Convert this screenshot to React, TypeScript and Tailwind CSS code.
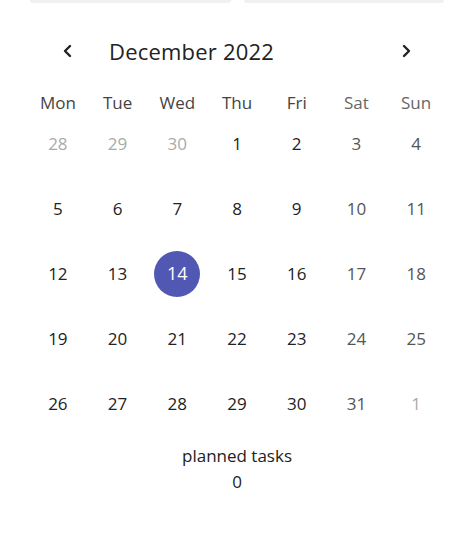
import React from "react";

const weeks: { d: number; muted?: boolean; sel?: boolean }[][] = [
  [{ d: 28, muted: true }, { d: 29, muted: true }, { d: 30, muted: true }, { d: 1 }, { d: 2 }, { d: 3 }, { d: 4 }],
  [{ d: 5 }, { d: 6 }, { d: 7 }, { d: 8 }, { d: 9 }, { d: 10 }, { d: 11 }],
  [{ d: 12 }, { d: 13 }, { d: 14, sel: true }, { d: 15 }, { d: 16 }, { d: 17 }, { d: 18 }],
  [{ d: 19 }, { d: 20 }, { d: 21 }, { d: 22 }, { d: 23 }, { d: 24 }, { d: 25 }],
  [{ d: 26 }, { d: 27 }, { d: 28 }, { d: 29 }, { d: 30 }, { d: 31 }, { d: 1, muted: true }],
];

const names = ["Mon", "Tue", "Wed", "Thu", "Fri", "Sat", "Sun"];

export default function App() {
  return (
    <div
      className="w-[474px] h-[539px] bg-white relative overflow-hidden"
      style={{ fontFamily: "'Open Sans', 'Noto Sans', sans-serif" }}
    >
      <div className="flex gap-[13px] px-[30px] h-[3px]">
        <div className="flex-1 bg-[#f0f0f0] rounded-b" />
        <div className="flex-1 bg-[#f0f0f0] rounded-b" />
      </div>
      <div className="px-[28px]">
        <div className="flex items-center h-[40px] mt-[28px]">
          <div className="w-[80px] flex justify-center">
            <svg width="14" height="14" viewBox="0 0 14 14" fill="none" stroke="#222" strokeWidth="2.4" strokeLinecap="round" strokeLinejoin="round">
              <path d="M9 2 L4 7 L9 12" />
            </svg>
          </div>
          <div className="text-[22px] text-[#222] ml-[1px] tracking-[0.2px]">December 2022</div>
          <div className="flex-1" />
          <div className="w-[80px] flex justify-center">
            <svg width="14" height="14" viewBox="0 0 14 14" fill="none" stroke="#222" strokeWidth="2.4" strokeLinecap="round" strokeLinejoin="round">
              <path d="M5 2 L10 7 L5 12" />
            </svg>
          </div>
        </div>
        <div className="grid grid-cols-7 mt-[24px] h-[16px] items-center">
          {names.map((n, i) => (
            <div key={n} className={`text-center text-[17px] leading-[16px] ${i >= 5 ? "text-[#666]" : "text-[#444]"}`}>
              {n}
            </div>
          ))}
        </div>
        <div>
          {weeks.map((w, r) => (
            <div key={r} className="grid grid-cols-7 h-[65px] items-center">
              {w.map((c, i) => (
                <div key={i} className="flex justify-center items-center">
                  {c.sel ? (
                    <div className="w-[46px] h-[46px] rounded-full bg-[#5058b3] text-white flex items-center justify-center text-[18px]">
                      {c.d}
                    </div>
                  ) : (
                    <span
                      className={`text-[17px] ${
                        c.muted ? "text-[#aaa]" : i >= 5 ? "text-[#555]" : "text-[#222]"
                      }`}
                    >
                      {c.d}
                    </span>
                  )}
                </div>
              ))}
            </div>
          ))}
        </div>
        <div className="flex flex-col items-center mt-[7px] text-[#222] text-[17px] leading-[26px]">
          <div>planned tasks</div>
          <div>0</div>
        </div>
      </div>
    </div>
  );
}
